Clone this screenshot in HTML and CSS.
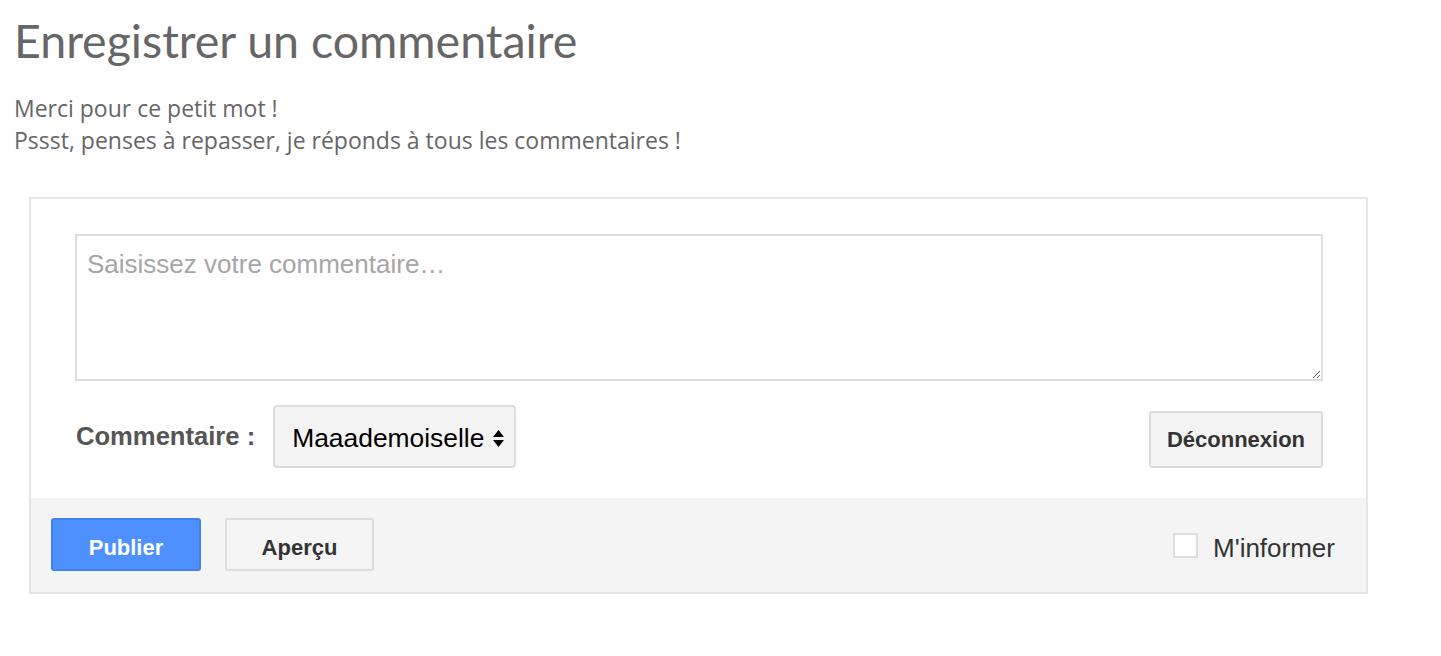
FILE: index.html
```html
<!DOCTYPE html>
<html lang="fr">
<head>
<meta charset="utf-8">
<title>Enregistrer un commentaire</title>
<link rel="stylesheet" href="styles.css">
</head>
<body>
<div class="page">
  <h1 class="title">Enregistrer un commentaire</h1>
  <p class="intro">Merci pour ce petit mot !<br>Pssst, penses à repasser, je réponds à tous les commentaires !</p>

  <div class="comment-box">
    <div class="comment-main">
      <textarea class="comment-input" placeholder="Saisissez votre commentaire…"></textarea>
      <div class="identity-row">
        <div class="identity">
          <span class="identity-label">Commentaire :</span>
          <div class="fake-select">
            <span class="fake-select-text">Maaademoiselle</span>
            <svg class="fake-select-arrows" width="11" height="17" viewBox="0 0 11 17">
              <polygon points="5.5,0 11,7 0,7" fill="#000"/>
              <polygon points="0,10 11,10 5.5,17" fill="#000"/>
            </svg>
          </div>
        </div>
        <button class="btn btn-grey btn-logout">Déconnexion</button>
      </div>
    </div>
    <div class="comment-footer">
      <div class="actions">
        <button class="btn btn-blue">Publier</button>
        <button class="btn btn-grey btn-preview">Aperçu</button>
      </div>
      <label class="notify">
        <span class="checkbox"></span>
        <span class="notify-text">M'informer</span>
      </label>
    </div>
  </div>
</div>
</body>
</html>
```

FILE: styles.css
```css
html, body {
  margin: 0;
  padding: 0;
  background: #ffffff;
}

.page {
  padding: 12px 0 0 14px;
}

.title {
  margin: 0;
  font-family: "Lato", "DejaVu Sans", sans-serif;
  font-weight: 400;
  font-size: 46.5px;
  line-height: 56px;
  color: #666666;
}

.intro {
  margin: 24px 0 0 0;
  font-family: "Open Sans", "DejaVu Sans", sans-serif;
  font-size: 23px;
  line-height: 32px;
  color: #666666;
}

.comment-box {
  margin: 41px 0 0 15px;
  width: 1335px;
  border: 2px solid #e5e5e5;
  background: #ffffff;
}

.comment-main {
  padding: 35px 43px 30px 44px;
}

.comment-input {
  display: block;
  box-sizing: border-box;
  width: 100%;
  height: 147px;
  margin: 0;
  padding: 13px 10px;
  border: 2px solid #dddddd;
  border-radius: 0;
  font-family: "Liberation Sans", Arial, sans-serif;
  font-size: 26px;
  color: #333333;
  resize: vertical;
  outline: none;
}

.comment-input::placeholder {
  color: #a6a6a6;
}

.identity-row {
  display: flex;
  justify-content: space-between;
  align-items: flex-end;
  margin-top: 24px;
}

.identity {
  display: flex;
  align-items: center;
  gap: 18px;
}

.identity-label {
  font-family: "Liberation Sans", Arial, sans-serif;
  font-weight: 700;
  font-size: 25.6px;
  color: #555555;
  margin-left: 1px;
}

.fake-select {
  box-sizing: border-box;
  width: 243px;
  height: 63px;
  display: flex;
  align-items: center;
  justify-content: space-between;
  padding: 0 10px 0 17px;
  background: #f3f3f3;
  border: 2px solid #dcdcdc;
  border-radius: 4px;
}

.fake-select-text {
  font-family: "Liberation Sans", Arial, sans-serif;
  font-size: 26.4px;
  color: #000000;
  padding-top: 4px;
}

.fake-select-arrows {
  display: block;
  margin-top: 4px;
}

.btn {
  box-sizing: border-box;
  margin: 0;
  font-family: "Liberation Sans", Arial, sans-serif;
  font-weight: 700;
  font-size: 22px;
  border-radius: 3px;
  cursor: pointer;
}

.btn-grey {
  background: #f3f3f3;
  border: 2px solid #dcdcdc;
  color: #333333;
}

.btn-logout {
  width: 174px;
  height: 57px;
  padding: 0;
}

.comment-footer {
  display: flex;
  justify-content: space-between;
  align-items: center;
  background: #f4f4f4;
  padding: 20px 31px 21px 20px;
}

.actions {
  display: flex;
  gap: 24px;
}

.btn-blue {
  width: 150px;
  height: 53px;
  padding: 6px 0 0 0;
  background: #4d90fe;
  border: 2px solid #3f82f0;
  color: #ffffff;
}

.btn-preview {
  width: 149px;
  height: 53px;
  padding: 6px 0 0 0;
  background: #f5f5f5;
}

.notify {
  display: flex;
  align-items: center;
  gap: 15px;
  margin-top: 7px;
}

.checkbox {
  display: block;
  box-sizing: border-box;
  width: 25px;
  height: 25px;
  background: #ffffff;
  border: 2px solid #dddddd;
  margin-top: -6px;
}

.notify-text {
  font-family: "Liberation Sans", Arial, sans-serif;
  font-size: 26px;
  color: #333333;
}
```
